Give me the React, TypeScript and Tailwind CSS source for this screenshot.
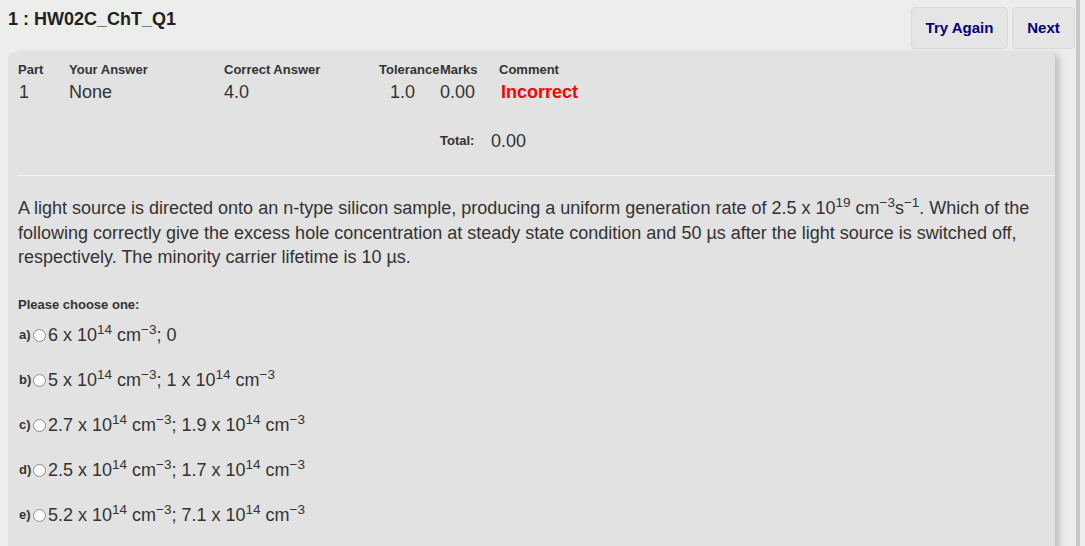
import React from "react";

const font = { fontFamily: '"Liberation Sans", Arial, sans-serif' };

const options = [
  { key: "a)", parts: [["6 x 10", "14"], [" cm", "−3"], ["; 0", null]] },
  { key: "b)", parts: [["5 x 10", "14"], [" cm", "−3"], ["; 1 x 10", "14"], [" cm", "−3"]] },
  { key: "c)", parts: [["2.7 x 10", "14"], [" cm", "−3"], ["; 1.9 x 10", "14"], [" cm", "−3"]] },
  { key: "d)", parts: [["2.5 x 10", "14"], [" cm", "−3"], ["; 1.7 x 10", "14"], [" cm", "−3"]] },
  { key: "e)", parts: [["5.2 x 10", "14"], [" cm", "−3"], ["; 7.1 x 10", "14"], [" cm", "−3"]] },
] as const;

function ResultTable() {
  return (
    <div className="pl-[10px] pt-[10px] text-[#333]">
      <div className="flex h-[16px] items-center text-[13px] font-bold leading-[16px]">
        <span className="w-[51px]">Part</span>
        <span className="w-[155px]">Your Answer</span>
        <span className="w-[155px]">Correct Answer</span>
        <span className="w-[61px]">Tolerance</span>
        <span className="w-[51px]">Marks</span>
        <span className="pl-[8px]">Comment</span>
      </div>
      <div className="mt-[4px] flex h-[20px] items-center text-[18px] leading-[20px]">
        <span className="w-[51px] pl-[1px]">1</span>
        <span className="w-[155px]">None</span>
        <span className="w-[155px]">4.0</span>
        <span className="w-[61px] pl-[11px]">1.0</span>
        <span className="w-[51px]">0.00</span>
        <span className="pl-[10px] font-bold text-[#ff0000]">Incorrect</span>
      </div>
      <div className="mt-[29px] flex h-[20px] items-center leading-[20px]">
        <span className="w-[422px]" />
        <span className="w-[51px] text-[13px] font-bold">Total:</span>
        <span className="text-[18px]">0.00</span>
      </div>
    </div>
  );
}

function Question() {
  return (
    <div className="px-[10px] pt-[20px] text-[#333]">
      <p className="w-[1027px] text-[18px] leading-[24.5px]">
        A light source is directed onto an n-type silicon sample, producing a uniform generation rate of 2.5 x 10
        <sup>19</sup> cm<sup>−3</sup>s<sup>−1</sup>. Which of the following correctly give the excess hole
        concentration at steady state condition and 50 µs after the light source is switched off, respectively. The
        minority carrier lifetime is 10 µs.
      </p>
      <div className="mt-[27px] h-[16px] text-[13px] font-bold leading-[16px]">Please choose one:</div>
      <div className="flex flex-col">
        {options.map((o) => (
          <div key={o.key} className="flex h-[45px] items-center">
            <span className="w-[14px] pl-[1px] text-[13px] font-bold">{o.key}</span>
            <span className="ml-[1px] h-[13px] w-[13px] rounded-full border border-[#8d8d8d] bg-white" />
            <span className="ml-[2px] text-[18px] leading-[20px]">
              {o.parts.map(([t, s], i) => (
                <React.Fragment key={i}>
                  {t}
                  {s && <sup>{s}</sup>}
                </React.Fragment>
              ))}
            </span>
          </div>
        ))}
      </div>
    </div>
  );
}

export default function App() {
  return (
    <div className="flex h-[546px] w-[1085px] overflow-hidden bg-[#ebeeea]" style={font}>
      <div className="w-[1076px] shrink-0 pl-[8px] pr-[1px]">
        <div className="flex items-start justify-between pt-[7px]">
          <h1 className="mt-[1px] text-[18px] font-bold leading-[22px] text-[#222]">1 : HW02C_ChT_Q1</h1>
          <div className="flex gap-[4px]">
            <button className="h-[42px] w-[97px] rounded-[4px] border border-[#d9dbd9] bg-[#e4e5e4] text-[15px] font-bold text-[#000080]">
              Try Again
            </button>
            <button className="h-[42px] w-[63px] rounded-[4px] border border-[#d9dbd9] bg-[#e4e5e4] text-[15px] font-bold text-[#000080]">
              Next
            </button>
          </div>
        </div>
        <div className="mt-[3px] h-[600px] w-[1047px] rounded-[7px] bg-[#e1e2e1] shadow-[5px_2px_6px_rgba(0,0,0,0.18)]">
          <div className="h-[123px]">
            <ResultTable />
          </div>
          <div className="ml-[10px] h-px bg-[#f5f5f5]" />
          <Question />
        </div>
      </div>
      <div className="w-[4px] shrink-0 bg-[#c7c9c7]" />
      <div className="flex-1" />
    </div>
  );
}
